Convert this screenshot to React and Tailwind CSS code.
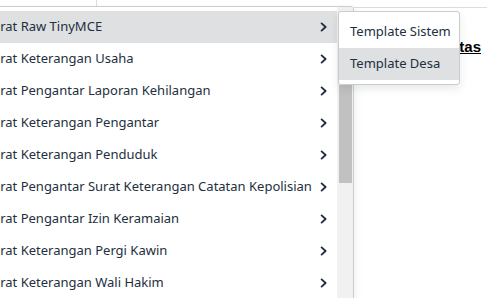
import React from 'react'

const surat = [
  'Surat Raw TinyMCE',
  'Surat Keterangan Usaha',
  'Surat Pengantar Laporan Kehilangan',
  'Surat Keterangan Pengantar',
  'Surat Keterangan Penduduk',
  'Surat Pengantar Surat Keterangan Catatan Kepolisian',
  'Surat Pengantar Izin Keramaian',
  'Surat Keterangan Pergi Kawin',
  'Surat Keterangan Wali Hakim',
  'Surat Keterangan Domisili',
  'Surat Keterangan Kelahiran',
]

const Chevron = () => (
  <svg width="8" height="10" viewBox="0 0 8 10" className="shrink-0">
    <polyline points="1.6,1.4 5.6,5 1.6,8.6" fill="none" stroke="#222f3e" strokeWidth="1.9" strokeLinecap="round" strokeLinejoin="round" />
  </svg>
)

export default function App() {
  return (
    <div className="relative h-[298px] w-[487px] overflow-hidden bg-white font-['Noto_Sans','Open_Sans',sans-serif]">

      {/* Halaman di belakang menu */}
      <div className="h-[8px] border-b border-[#dddddd] flex">
        <div className="w-[97px] border-r border-[#dddddd]" />
      </div>
      <div className="pt-[26px] pr-[6px] text-right">
        <span className="font-['Liberation_Sans',Arial,sans-serif] font-bold text-[15px] leading-[18px] text-black underline">
          Batas
        </span>
      </div>

      {/* Menu utama */}
      <div className="absolute left-[-30px] top-[6px] w-[384px] h-[320px] flex bg-white border border-[#cccccc] rounded-[3px] shadow-[0_4px_8px_0_rgba(34,47,62,0.1)]">
        <div className="w-[366px] shrink-0 py-[4px] overflow-hidden">
          {surat.map((s, i) => (
            <div
              key={s}
              className={`h-[32px] flex items-center justify-between gap-2 pl-[14px] pr-[9px] text-[13px] text-[#222f3e] ${
                i === 0 ? 'bg-[#dee0e2]' : ''
              }`}
            >
              <span className="whitespace-nowrap min-w-0">{s}</span>
              <Chevron />
            </div>
          ))}
        </div>
        {/* Scrollbar */}
        <div className="w-[16px] shrink-0 bg-[#f1f1f1] pt-[78px]">
          <div className="ml-[2px] w-[13px] h-[98px] bg-[#c1c1c1]" />
        </div>
      </div>

      {/* Sub menu */}
      <div className="absolute left-[338px] top-[11px] w-[122px] py-[4px] bg-white border border-[#cccccc] rounded-[3px] shadow-[0_4px_8px_0_rgba(34,47,62,0.1)]">
        <div className="h-[32px] flex items-center pl-[11px] text-[13px] text-[#222f3e] whitespace-nowrap">
          Template Sistem
        </div>
        <div className="h-[32px] flex items-center pl-[11px] text-[13px] text-[#222f3e] bg-[#dee0e2] whitespace-nowrap">
          Template Desa
        </div>
      </div>
    </div>
  )
}
